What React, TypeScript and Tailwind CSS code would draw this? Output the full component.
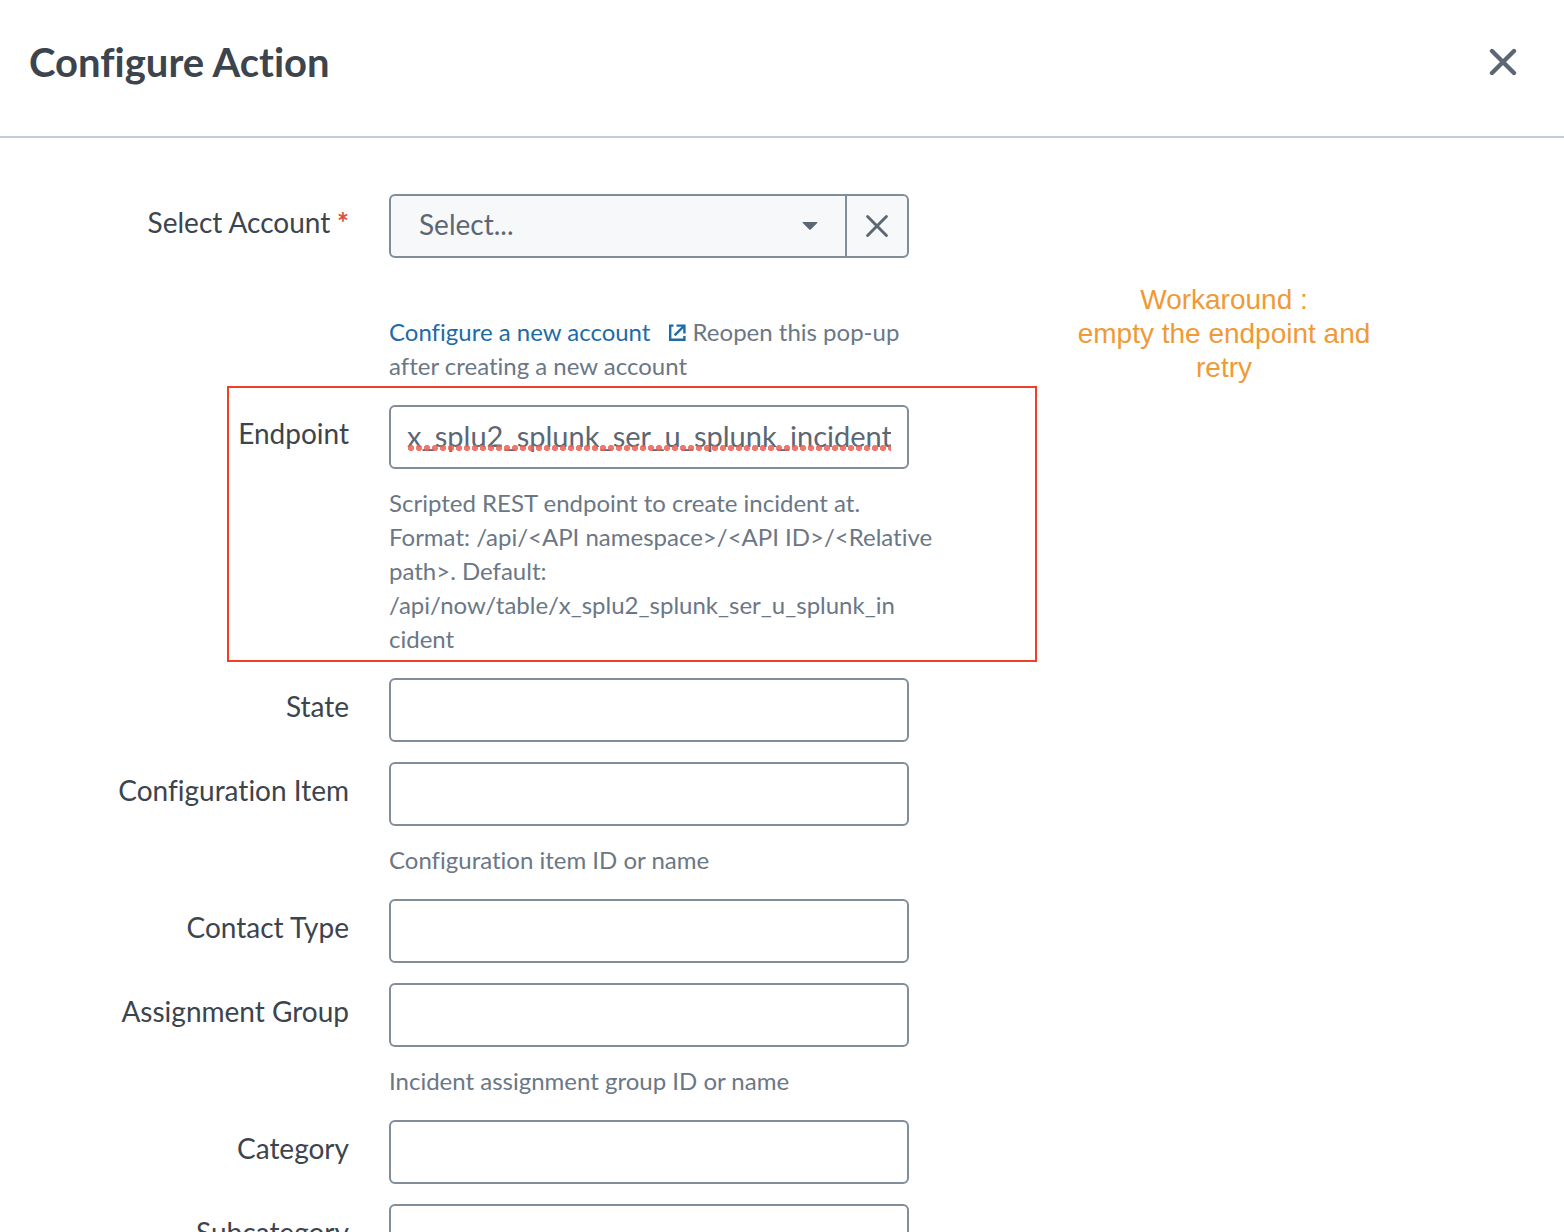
import React, { useState } from "react";

type Field = {
  id: string;
  label: string;
  help?: string;
};

const fields: Field[] = [
  { id: "state", label: "State" },
  {
    id: "configuration-item",
    label: "Configuration Item",
    help: "Configuration item ID or name",
  },
  { id: "contact-type", label: "Contact Type" },
  {
    id: "assignment-group",
    label: "Assignment Group",
    help: "Incident assignment group ID or name",
  },
  { id: "category", label: "Category" },
  { id: "subcategory", label: "Subcategory" },
];

const inputClass =
  "block h-16 w-full rounded-md border-2 border-[#818d99] bg-white px-4 pb-1 text-[29px] text-[#5c6773] outline-none";

const CloseIcon = ({ className, stroke }: { className: string; stroke: number }) => (
  <svg viewBox="0 0 28 28" fill="none" className={className} aria-hidden="true">
    <path
      d="M3 3 25 25M25 3 3 25"
      stroke="currentColor"
      strokeWidth={stroke}
      strokeLinecap="round"
    />
  </svg>
);

const ExternalIcon = () => (
  <svg
    viewBox="0 0 18 18"
    fill="none"
    stroke="currentColor"
    strokeWidth="2.4"
    className="ml-[18px] inline-block h-[18px] w-[18px] align-[-1px]"
    aria-hidden="true"
  >
    <path d="M5.5 1.6H2.2V15.8H16.4V12" />
    <path d="M8.5 1.6H16.4V9.5" />
    <path d="M16 2 6.6 11.4" />
  </svg>
);

// label on the left, control and help text on the right
const Row: React.FC<{
  id: string;
  label: string;
  required?: boolean;
  children: React.ReactNode;
}> = ({ id, label, required, children }) => (
  <div className="relative grid grid-cols-[349px_520px] gap-x-10">
    <label
      htmlFor={id}
      className="pt-[11px] text-right text-[28px] leading-[34px] text-[#3c444d]"
    >
      {label}
      {required && <span className="font-bold text-[#d94e3c]"> *</span>}
    </label>
    <div>{children}</div>
  </div>
);

const Help: React.FC<{ children: React.ReactNode }> = ({ children }) => (
  <p className="mt-[17px] pb-[2px] text-2xl leading-[34px] break-words text-[#6b7785]">
    {children}
  </p>
);

const App: React.FC = () => {
  const [account, setAccount] = useState("");
  const [endpoint, setEndpoint] = useState(
    "x_splu2_splunk_ser_u_splunk_incident"
  );

  return (
    <div className="flex h-screen flex-col overflow-hidden bg-white font-['Lato',sans-serif] [font-variant-ligatures:none]">
      <header className="flex shrink-0 items-center justify-between border-b-2 border-[#c3cbd4] pt-[38px] pr-[47px] pb-[50px] pl-[29px]">
        <h1 className="text-[40px] leading-[48px] font-bold text-[#3c444d]">
          Configure Action
        </h1>
        <button type="button" aria-label="Close" className="text-[#5c6773]">
          <CloseIcon className="h-7 w-7" stroke={4.4} />
        </button>
      </header>

      <main className="relative flex-1 overflow-y-auto pt-14 [scrollbar-width:none]">
        <form className="flex flex-col gap-5">
          <Row id="account" label="Select Account" required>
            <div className="flex h-16 overflow-hidden rounded-md border-2 border-[#818d99] bg-[#f7f8fa] text-[#5c6773]">
              <div className="relative flex-1">
                <select
                  id="account"
                  value={account}
                  onChange={(e) => setAccount(e.target.value)}
                  className="h-full w-full appearance-none pb-1 pl-7 text-[28px] outline-none"
                >
                  <option value="">Select...</option>
                </select>
                <svg
                  viewBox="0 0 16 8"
                  className="pointer-events-none absolute top-[26px] right-[27px] h-2 w-4"
                  aria-hidden="true"
                >
                  <path d="M1 0H15Q16 .4 15 1.2L8.7 7.6Q8 8.2 7.3 7.6L1 1.2Q0 .4 1 0Z" fill="currentColor" />
                </svg>
              </div>
              <button
                type="button"
                aria-label="Clear account"
                onClick={() => setAccount("")}
                className="flex w-[62px] items-center justify-center border-l-2 border-[#818d99]"
              >
                <CloseIcon className="h-6 w-6" stroke={3.4} />
              </button>
            </div>
            <div className="pt-10">
              <Help>
                <a href="#account" className="text-[#1e6ba8]">
                  Configure a new account
                  <ExternalIcon />
                </a>{" "}
                Reopen this pop-up after creating a new account
              </Help>
            </div>
          </Row>

          <Row id="endpoint" label="Endpoint">
            <div className="relative">
              <input
                id="endpoint"
                type="text"
                spellCheck={false}
                value={endpoint}
                onChange={(e) => setEndpoint(e.target.value)}
                className={inputClass}
              />
              {/* spelling marks under the value */}
              <span className="pointer-events-none absolute right-[18px] bottom-[17px] left-[18px] h-2 bg-[radial-gradient(circle,#ee5f50d9_2.8px,transparent_3.4px)] bg-[length:8px_8px]" />
            </div>
            <Help>
              Scripted REST endpoint to create incident at.{" "}
              <span className="whitespace-nowrap">
                Format: /api/&lt;API namespace&gt;/&lt;API ID&gt;/&lt;Relative
              </span>
              <br />
              path&gt;. Default:
              <br />
              /api/now/table/x_splu2_splunk_ser_u_splunk_in
              <wbr />
              cident
            </Help>
            {/* callout frame */}
            <div className="pointer-events-none absolute -top-[19px] -bottom-1 left-[227px] w-[810px] border-2 border-[#ed4025]" />
          </Row>

          {fields.map((field) => (
            <Row key={field.id} id={field.id} label={field.label}>
              <input id={field.id} type="text" className={inputClass} />
              {field.help && <Help>{field.help}</Help>}
            </Row>
          ))}
        </form>

        <p className="absolute top-[145px] left-[1064px] w-80 text-center font-['Liberation_Sans',sans-serif] text-[28px] leading-[34px] text-[#f09a35]">
          Workaround :<br />
          empty the endpoint and retry
        </p>
      </main>
    </div>
  );
};

export default App;
